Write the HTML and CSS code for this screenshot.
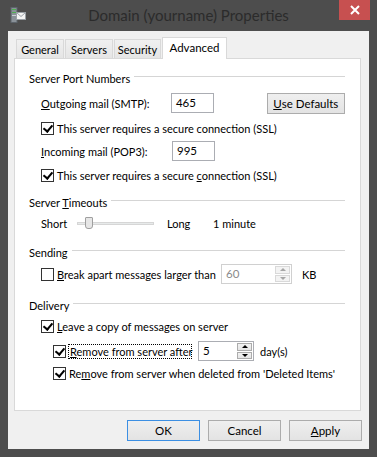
FILE: index.html
```html
<!DOCTYPE html>
<html lang="en">
<head>
    <meta charset="UTF-8">
    <meta name="viewport" content="width=device-width, initial-scale=1.0">
    <title>Domain (yourname) Properties</title>
    <link rel="stylesheet" href="styles.css">
</head>
<body>
<div class="janela">
    <div class="barra-titulo">
        <div class="titulo-esq">
            <svg class="icone-app" width="16" height="16" viewBox="0 0 16 16">
                <rect x="1" y="0.5" width="6" height="15" fill="#8a9198" stroke="#5d646b"/>
                <rect x="2" y="2" width="4" height="1" fill="#4caf50"/>
                <rect x="2" y="5" width="4" height="1" fill="#4caf50"/>
                <rect x="2" y="8" width="4" height="1" fill="#c9d0d6"/>
                <rect x="6.5" y="5.5" width="9" height="7" fill="#f4f4f4" stroke="#9aa0a6"/>
                <path d="M6.5 5.5 L11 9.5 L15.5 5.5" fill="none" stroke="#9aa0a6"/>
            </svg>
        </div>
        <div class="titulo">Domain (yourname) Properties</div>
        <div class="titulo-dir">
            <div class="fechar">
                <svg width="10" height="10" viewBox="0 0 10 10">
                    <path d="M1 1 L9 9 M9 1 L1 9" stroke="#fff" stroke-width="2"/>
                </svg>
            </div>
        </div>
    </div>

    <div class="cliente">
        <div class="abas">
            <div class="aba w49">General</div>
            <div class="aba w49">Servers</div>
            <div class="aba w48">Security</div>
            <div class="aba ativa">Advanced</div>
        </div>

        <div class="painel">
            <!-- Server Port Numbers -->
            <div class="grupo-cab"><span>Server Port Numbers</span><i></i></div>
            <div class="linha mt7">
                <span class="rotulo"><u>O</u>utgoing mail (SMTP):</span>
                <span class="campo">465</span>
                <span class="botao defaults"><u>U</u>se Defaults</span>
            </div>
            <div class="linha mt5">
                <span class="check marcado"></span>
                <span>This server requires a secure connection (SSL)</span>
            </div>
            <div class="linha mt3">
                <span class="rotulo"><u>I</u>ncoming mail (POP3):</span>
                <span class="campo">995</span>
            </div>
            <div class="linha mt4">
                <span class="check marcado"></span>
                <span>This server requires a secure <u>c</u>onnection (SSL)</span>
            </div>

            <!-- Server Timeouts -->
            <div class="grupo-cab mt9"><span>Server <u>T</u>imeouts</span><i></i></div>
            <div class="linha mt3">
                <span class="curto">Short</span>
                <span class="slider"><b></b></span>
                <span class="longo">Long</span>
                <span>1 minute</span>
            </div>

            <!-- Sending -->
            <div class="grupo-cab mt11"><span>Sending</span><i></i></div>
            <div class="linha mt4">
                <span class="check"></span>
                <span class="quebra"><u>B</u>reak apart messages larger than</span>
                <span class="spin desab w71">
                    <span class="valor">60</span>
                    <span class="setas"><em class="cima"></em><em class="baixo"></em></span>
                </span>
                <span class="kb">KB</span>
            </div>

            <!-- Delivery -->
            <div class="grupo-cab mt13"><span>Delivery</span><i></i></div>
            <div class="linha mt3">
                <span class="check marcado"></span>
                <span><u>L</u>eave a copy of messages on server</span>
            </div>
            <div class="linha mt5 recuo">
                <span class="check marcado"></span>
                <span class="foco"><u>R</u>emove from server after</span>
                <span class="spin w56">
                    <span class="valor">5</span>
                    <span class="setas"><em class="cima"></em><em class="baixo"></em></span>
                </span>
                <span class="dias">day(s)</span>
            </div>
            <div class="linha mt2 recuo">
                <span class="check marcado"></span>
                <span>Re<u>m</u>ove from server when deleted from 'Deleted Items'</span>
            </div>
        </div>

        <div class="rodape">
            <span class="botao padrao">OK</span>
            <span class="botao">Cancel</span>
            <span class="botao"><u>A</u>pply</span>
        </div>
    </div>
</div>
</body>
</html>
```
FILE: styles.css
```css
* {
    box-sizing: border-box;
}

body {
    margin: 0;
    padding: 0;
    background: #4d4d4d;
    font-family: 'Lato', 'Liberation Sans', sans-serif;
    font-size: 11px;
    color: #000;
}

.janela {
    width: 377px;
    height: 457px;
    background: #4d4d4d;
    display: flex;
    flex-direction: column;
}

/* Barra de titulo */
.barra-titulo {
    height: 31px;
    display: grid;
    grid-template-columns: 1fr auto 1fr;
}

.titulo-esq {
    padding: 7px 0 0 10px;
}

.icone-app {
    display: block;
}

.titulo {
    font-size: 15px;
    color: #2b2b2b;
    line-height: 30px;
}

.titulo-dir {
    display: flex;
    justify-content: flex-end;
    padding-right: 7px;
}

.fechar {
    width: 31px;
    height: 20px;
    background: #c75050;
    display: flex;
    align-items: center;
    justify-content: center;
}

/* Area cliente */
.cliente {
    margin: 0 8px;
    height: 418px;
    background: #f0f0f0;
    padding: 7px 0 0 6px;
}

.abas {
    display: flex;
    align-items: flex-end;
    height: 20px;
    margin-left: 2px;
    position: relative;
    z-index: 1;
}

.aba {
    height: 19px;
    border: 1px solid #d9d9d9;
    border-bottom: none;
    background: linear-gradient(#f0f0f0, #e5e5e5);
    display: flex;
    align-items: center;
    justify-content: center;
    margin-right: 1px;
    padding-top: 1px;
}

.aba.w49 { width: 48px; }
.aba.w48 { width: 47px; }

.aba.ativa {
    width: 65px;
    height: 22px;
    margin-bottom: -1px;
    margin-right: 0;
    background: #fff;
    border-color: #d9d9d9;
    padding-top: 0;
    padding-bottom: 3px;
    font-size: 11.5px;
}

.painel {
    width: 347px;
    height: 353px;
    background: #fff;
    border: 1px solid #d9d9d9;
    padding: 11px 15px 0 14px;
}

.grupo-cab {
    height: 16px;
    display: flex;
    align-items: center;
    gap: 4px;
}

.grupo-cab i {
    flex: 1;
    height: 1px;
    background: #d5d5d5;
    margin-top: -3px;
}

.linha {
    height: 20px;
    display: flex;
    align-items: center;
    padding-left: 12px;
    white-space: nowrap;
}

.linha.recuo {
    padding-left: 24px;
}

.mt2 { margin-top: 2px; }
.mt3 { margin-top: 3px; }
.mt4 { margin-top: 4px; }
.mt5 { margin-top: 5px; }
.mt7 { margin-top: 7px; }
.mt9 { margin-top: 9px; }
.mt11 { margin-top: 11px; }
.mt13 { margin-top: 13px; }

.rotulo {
    width: 131px;
}

.campo {
    width: 43px;
    height: 20px;
    border: 1px solid #abadb3;
    background: #fff;
    padding: 0 4px;
    line-height: 18px;
    font-size: 11.5px;
}

.botao {
    width: 73px;
    height: 21px;
    background: linear-gradient(#efefef, #e3e3e3);
    border: 1px solid #acacac;
    display: flex;
    align-items: center;
    justify-content: center;
    font-size: 11.5px;
}

.botao.defaults {
    width: 79px;
    margin-left: 53px;
    height: 21px;
}

.botao.padrao {
    border-color: #3c8fe3;
}

/* Caixa de selecao */
.check {
    width: 13px;
    height: 13px;
    border: 1px solid #333;
    background: #fff;
    margin-right: 3px;
    flex-shrink: 0;
    position: relative;
}

.check.marcado::after {
    content: '';
    position: absolute;
    left: 3px;
    top: 0px;
    width: 4px;
    height: 7px;
    border: solid #000;
    border-width: 0 2px 2px 0;
    transform: rotate(40deg);
}

/* Slider */
.curto {
    width: 36px;
}

.slider {
    width: 77px;
    height: 3px;
    background: #e7eaea;
    border: 1px solid #d6d6d6;
    position: relative;
    margin-right: 13px;
}

.slider b {
    position: absolute;
    left: 7px;
    top: -6px;
    width: 8px;
    height: 12px;
    background: #e6e6e6;
    border: 1px solid #9f9f9f;
    border-radius: 1px 1px 3px 3px;
}

.longo {
    width: 46px;
}

/* Spinner */
.quebra {
    width: 164px;
}

.spin {
    height: 20px;
    border: 1px solid #abadb3;
    background: #fff;
    display: flex;
    align-items: stretch;
}

.spin.w71 { width: 71px; }
.spin.w56 { width: 56px; margin-left: 7px; }

.spin .valor {
    flex: 1;
    padding-left: 4px;
    line-height: 18px;
    font-size: 11.5px;
}

.spin.desab {
    border-color: #d0d0d0;
}

.spin.desab .valor {
    color: #8a8a8a;
}

.setas {
    width: 16px;
    display: flex;
    flex-direction: column;
    gap: 1px;
    padding: 1px 1px 1px 0;
}

.setas em {
    flex: 1;
    background: linear-gradient(#f2f2f2, #e5e5e5);
    border: 1px solid #acacac;
    display: flex;
    align-items: center;
    justify-content: center;
}

.setas .cima::before {
    content: '';
    border: 3px solid transparent;
    border-top: none;
    border-bottom: 3px solid #000;
}

.setas .baixo::before {
    content: '';
    border: 3px solid transparent;
    border-bottom: none;
    border-top: 3px solid #000;
}

.spin.desab .setas em {
    border-color: #d9d9d9;
    background: #f3f3f3;
}

.spin.desab .setas .cima::before { border-bottom-color: #a6a6a6; }
.spin.desab .setas .baixo::before { border-top-color: #a6a6a6; }

.kb {
    margin-left: 10px;
}

.foco {
    outline: 1px dotted #000;
    outline-offset: 0;
    padding: 0 1px;
    line-height: 13px;
    width: 122px;
    flex-shrink: 0;
}

.dias {
    margin-left: 6px;
}

/* Rodape */
.rodape {
    display: flex;
    justify-content: flex-end;
    gap: 8px;
    margin-top: 9px;
    padding-right: 7px;
}
```
